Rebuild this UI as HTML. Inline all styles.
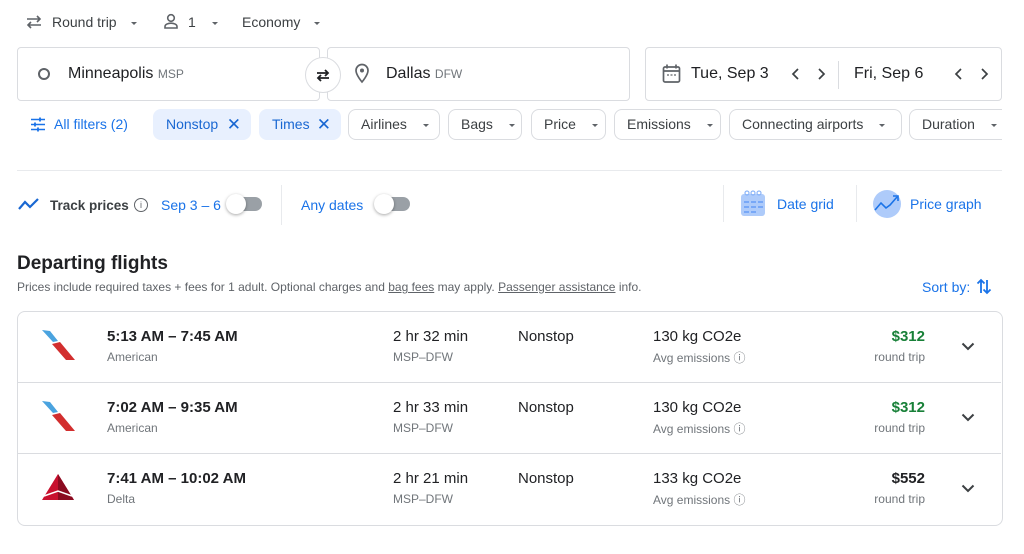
<!DOCTYPE html>
<html><head><meta charset="utf-8"><style>
*{box-sizing:border-box;margin:0;padding:0}
body{width:1024px;height:554px;background:#fff;font-family:"Liberation Sans",Arial,sans-serif;color:#202124;position:relative;overflow:hidden}
.a{position:absolute;white-space:nowrap}
.box{position:absolute;border:1px solid #dadce0;border-radius:4px}
.chip{position:absolute;top:109px;height:31px;border:1px solid #dadce0;border-radius:8px;font-size:14px;color:#3c4043;line-height:29px;padding-left:12px}
.chip.sel{background:#e8f0fe;border-color:#e8f0fe;color:#1967d2}
.tri{display:inline-block;width:0;height:0;border-left:3px solid transparent;border-right:3px solid transparent;border-top:3px solid #5f6368;vertical-align:middle;margin-left:8px}
.blue{color:#1a73e8}
.sw{position:absolute;width:30px;height:14px;border-radius:7px;background:#9aa0a6}
.sw:after{content:"";position:absolute;left:-6px;top:-3px;width:20px;height:20px;border-radius:50%;background:#fff;box-shadow:0 1px 3px rgba(0,0,0,.35)}
.row{position:absolute;left:18px;width:983px;height:71px;border-bottom:1px solid #dadce0}
.t{position:absolute;left:89px;top:16px;font-size:15px;font-weight:bold;color:#202124}
.s{position:absolute;font-size:12px;color:#70757a}
.d{position:absolute;left:375px;top:16px;font-size:15px}
.n{position:absolute;left:500px;top:16px;font-size:15px}
.c{position:absolute;left:635px;top:16px;font-size:15px}
.p{position:absolute;right:76px;top:16px;font-size:15px;font-weight:bold;text-align:right}
.rt{position:absolute;right:76px;top:38px;font-size:12px;color:#70757a}
.chev{position:absolute;left:943px;top:30px}
</style></head><body>
<svg class="a" style="left:25px;top:14px" width="18" height="16" viewBox="0 0 18 16"><path d="M2 5h13M12 2l3 3-3 3M16 11H3M6 8l-3 3 3 3" fill="none" stroke="#5f6368" stroke-width="1.6"/></svg>
<div class="a" style="left:52px;top:14px;font-size:14px;color:#3c4043">Round trip<span class="tri" style="margin-left:14px"></span></div>
<svg class="a" style="left:163px;top:13px" width="16" height="17" viewBox="0 0 16 17"><circle cx="8" cy="5" r="3.3" fill="none" stroke="#5f6368" stroke-width="1.6"/><path d="M2 15v-1.5c0-2 3-3.3 6-3.3s6 1.3 6 3.3V15z" fill="none" stroke="#5f6368" stroke-width="1.6"/></svg>
<div class="a" style="left:188px;top:14px;font-size:14px;color:#3c4043">1<span class="tri" style="margin-left:16px"></span></div>
<div class="a" style="left:242px;top:14px;font-size:14px;color:#3c4043">Economy<span class="tri" style="margin-left:14px"></span></div>
<div class="box" style="left:17px;top:47px;width:303px;height:54px"></div>
<div class="box" style="left:327px;top:47px;width:303px;height:54px"></div>
<div class="a" style="left:305px;top:57px;width:36px;height:36px;border-radius:50%;background:#fff;border:1px solid #dadce0"></div>
<svg class="a" style="left:313px;top:65px" width="20" height="20" viewBox="0 0 20 20"><path d="M4 8h11M12 5l3 3-3 3M16 13H5M8 10l-3 3 3 3" fill="none" stroke="#202124" stroke-width="1.8"/></svg>
<div class="a" style="left:38px;top:68px;width:12px;height:12px;border:2px solid #5f6368;border-radius:50%"></div>
<div class="a" style="left:68px;top:65px;font-size:16px">Minneapolis <span style="font-size:12px;color:#70757a">MSP</span></div>
<svg class="a" style="left:354px;top:63px" width="16" height="21" viewBox="0 0 16 21"><path d="M8 1.5a6 6 0 0 0-6 6c0 4.5 6 11.5 6 11.5s6-7 6-11.5a6 6 0 0 0-6-6z" fill="none" stroke="#5f6368" stroke-width="1.7"/><circle cx="8" cy="7.5" r="2" fill="#5f6368"/></svg>
<div class="a" style="left:386px;top:65px;font-size:16px">Dallas <span style="font-size:12px;color:#70757a">DFW</span></div>
<div class="box" style="left:645px;top:47px;width:357px;height:54px"></div>
<div class="a" style="left:838px;top:61px;width:1px;height:28px;background:#dadce0"></div>
<svg class="a" style="left:662px;top:63px" width="19" height="21" viewBox="0 0 19 21"><rect x="1.5" y="4" width="16" height="15" rx="1.5" fill="none" stroke="#5f6368" stroke-width="1.7"/><path d="M1.5 8h16M5 1.5v4M14 1.5v4" stroke="#5f6368" stroke-width="1.7"/><path d="M5 12h2M8.5 12h2M12 12h2" stroke="#5f6368" stroke-width="1.2"/></svg>
<div class="a" style="left:691px;top:65px;font-size:16px">Tue, Sep 3</div>
<div class="a" style="left:854px;top:65px;font-size:16px">Fri, Sep 6</div>
<svg class="a" style="left:789px;top:67px" width="40" height="14" viewBox="0 0 40 14"><path d="M9 2L4 7l5 5M30 2l5 5-5 5" fill="none" stroke="#3c4043" stroke-width="1.7"/></svg>
<svg class="a" style="left:952px;top:67px" width="40" height="14" viewBox="0 0 40 14"><path d="M9 2L4 7l5 5M30 2l5 5-5 5" fill="none" stroke="#3c4043" stroke-width="1.7"/></svg>
<svg class="a" style="left:30px;top:117px" width="16" height="15" viewBox="0 0 16 15"><path d="M1 2.5h14M1 7.5h14M1 12.5h14" stroke="#1a73e8" stroke-width="1.5"/><path d="M10 0.5v4M5 5.5v4M8 10.5v4" stroke="#1a73e8" stroke-width="1.8"/></svg>
<div class="a blue" style="left:54px;top:116px;font-size:14px">All filters (2)</div>
<div class="chip sel" style="left:153px;width:98px">Nonstop<span style="position:absolute;right:9px;top:0;font-size:17px">✕</span></div>
<div class="chip sel" style="left:259px;width:82px">Times<span style="position:absolute;right:9px;top:0;font-size:17px">✕</span></div>
<div class="chip" style="left:348px;width:92px">Airlines<span class="tri" style="margin-left:16px"></span></div>
<div class="chip" style="left:448px;width:74px">Bags<span class="tri" style="margin-left:16px"></span></div>
<div class="chip" style="left:531px;width:75px">Price<span class="tri" style="margin-left:16px"></span></div>
<div class="chip" style="left:614px;width:107px">Emissions<span class="tri" style="margin-left:16px"></span></div>
<div class="chip" style="left:729px;width:173px">Connecting airports<span class="tri" style="margin-left:16px"></span></div>
<div class="chip" style="left:909px;width:100px;border-right:none;border-radius:8px 0 0 8px">Duration<span class="tri" style="margin-left:16px"></span></div>
<div class="a" style="left:1002px;top:105px;width:22px;height:40px;background:#fff"></div>
<div class="a" style="left:17px;top:170px;width:985px;height:1px;background:#e8eaed"></div>
<svg class="a" style="left:18px;top:197px" width="22" height="14" viewBox="0 0 22 14"><path d="M1 12l6-7 5 5 8-8" fill="none" stroke="#1967d2" stroke-width="2.2"/></svg>
<div class="a" style="left:50px;top:198px;font-size:13.5px;font-weight:bold;color:#3c4043">Track prices</div>
<div class="a" style="left:134px;top:198px;width:14px;height:14px;border:1px solid #5f6368;border-radius:50%;font-size:9px;line-height:12px;text-align:center;color:#5f6368">i</div>
<div class="a blue" style="left:161px;top:197px;font-size:14px">Sep 3 – 6</div>
<div class="sw" style="left:232px;top:197px"></div>
<div class="a" style="left:281px;top:185px;width:1px;height:40px;background:#e8eaed"></div>
<div class="a blue" style="left:301px;top:197px;font-size:14px">Any dates</div>
<div class="sw" style="left:380px;top:197px"></div>
<div class="a" style="left:723px;top:185px;width:1px;height:37px;background:#e8eaed"></div>
<div class="a" style="left:856px;top:185px;width:1px;height:37px;background:#e8eaed"></div>
<svg class="a" style="left:740px;top:190px" width="26" height="27" viewBox="0 0 26 27"><rect x="1" y="4" width="24" height="22" rx="3" fill="#aecbfa"/><circle cx="7" cy="3" r="2" fill="none" stroke="#8ab4f8" stroke-width="1.2"/><circle cx="13" cy="3" r="2" fill="none" stroke="#8ab4f8" stroke-width="1.2"/><circle cx="19" cy="3" r="2" fill="none" stroke="#8ab4f8" stroke-width="1.2"/><path d="M4 12h5M11 12h5M18 12h5M4 17h5M11 17h5M18 17h5M4 22h5M11 22h5" stroke="#669df6" stroke-width="1.5"/></svg>
<div class="a blue" style="left:777px;top:196px;font-size:14px">Date grid</div>
<svg class="a" style="left:872px;top:189px" width="30" height="30" viewBox="0 0 30 30"><circle cx="15" cy="15" r="14" fill="#aecbfa"/><path d="M3 21l6-7 5 5 4-3 7-8" fill="none" stroke="#1a73e8" stroke-width="1.6"/><path d="M21 7h5v5" fill="none" stroke="#1a73e8" stroke-width="1.6"/></svg>
<div class="a blue" style="left:910px;top:196px;font-size:14px">Price graph</div>
<div class="a" style="left:17px;top:253px;font-size:19px;font-weight:bold;color:#202124">Departing flights</div>
<div class="a" style="left:17px;top:280px;font-size:12px;color:#5f6368">Prices include required taxes + fees for 1 adult. Optional charges and <u>bag fees</u> may apply. <u>Passenger assistance</u> info.</div>
<div class="a blue" style="left:922px;top:279px;font-size:14px">Sort by:</div>
<svg class="a" style="left:976px;top:277px" width="16" height="19" viewBox="0 0 16 19"><path d="M5 16V3M1.5 6.5L5 3l3.5 3.5M11 3v13M7.5 12.5L11 16l3.5-3.5" fill="none" stroke="#1a73e8" stroke-width="1.8"/></svg>
<div class="box" style="left:17px;top:311px;width:986px;height:215px;border-radius:8px"></div>
<div class="row" style="top:312px">
<svg class="a" style="left:22px;top:16px" width="36" height="36" viewBox="0 0 36 36"><path d="M2 2l8 1 8 10-5 1z" fill="#4aa3df"/><path d="M14 16l8-2 15 18H28z" fill="#d22e2e" transform="translate(-2 0)"/></svg>
<div class="t">5:13 AM – 7:45 AM</div><div class="s" style="left:89px;top:38px">American</div>
<div class="d">2 hr 32 min</div><div class="s" style="left:375px;top:38px">MSP–DFW</div>
<div class="n">Nonstop</div>
<div class="c">130 kg CO2e</div><div class="s" style="left:635px;top:37px">Avg emissions ⓘ</div>
<div class="p" style="color:#188038">$312</div><div class="rt">round trip</div>
<svg class="chev" width="14" height="9" viewBox="0 0 14 9"><path d="M1.5 1.5l5.5 5.5 5.5-5.5" fill="none" stroke="#3c4043" stroke-width="2"/></svg>
</div>
<div class="row" style="top:383px">
<svg class="a" style="left:22px;top:16px" width="36" height="36" viewBox="0 0 36 36"><path d="M2 2l8 1 8 10-5 1z" fill="#4aa3df"/><path d="M14 16l8-2 15 18H28z" fill="#d22e2e" transform="translate(-2 0)"/></svg>
<div class="t">7:02 AM – 9:35 AM</div><div class="s" style="left:89px;top:38px">American</div>
<div class="d">2 hr 33 min</div><div class="s" style="left:375px;top:38px">MSP–DFW</div>
<div class="n">Nonstop</div>
<div class="c">130 kg CO2e</div><div class="s" style="left:635px;top:37px">Avg emissions ⓘ</div>
<div class="p" style="color:#188038">$312</div><div class="rt">round trip</div>
<svg class="chev" width="14" height="9" viewBox="0 0 14 9"><path d="M1.5 1.5l5.5 5.5 5.5-5.5" fill="none" stroke="#3c4043" stroke-width="2"/></svg>
</div>
<div class="row" style="top:454px;border-bottom:none">
<svg class="a" style="left:22px;top:18px" width="36" height="30" viewBox="0 0 36 30"><path d="M18 2L2 28h32z" fill="#c8102e"/><path d="M18 2L34 28H18z" fill="#8b0b20"/><path d="M4 24l14-5 14 5" fill="none" stroke="#fff" stroke-width="1.5"/></svg>
<div class="t">7:41 AM – 10:02 AM</div><div class="s" style="left:89px;top:38px">Delta</div>
<div class="d">2 hr 21 min</div><div class="s" style="left:375px;top:38px">MSP–DFW</div>
<div class="n">Nonstop</div>
<div class="c">133 kg CO2e</div><div class="s" style="left:635px;top:37px">Avg emissions ⓘ</div>
<div class="p">$552</div><div class="rt">round trip</div>
<svg class="chev" width="14" height="9" viewBox="0 0 14 9"><path d="M1.5 1.5l5.5 5.5 5.5-5.5" fill="none" stroke="#3c4043" stroke-width="2"/></svg>
</div>
</body></html>
